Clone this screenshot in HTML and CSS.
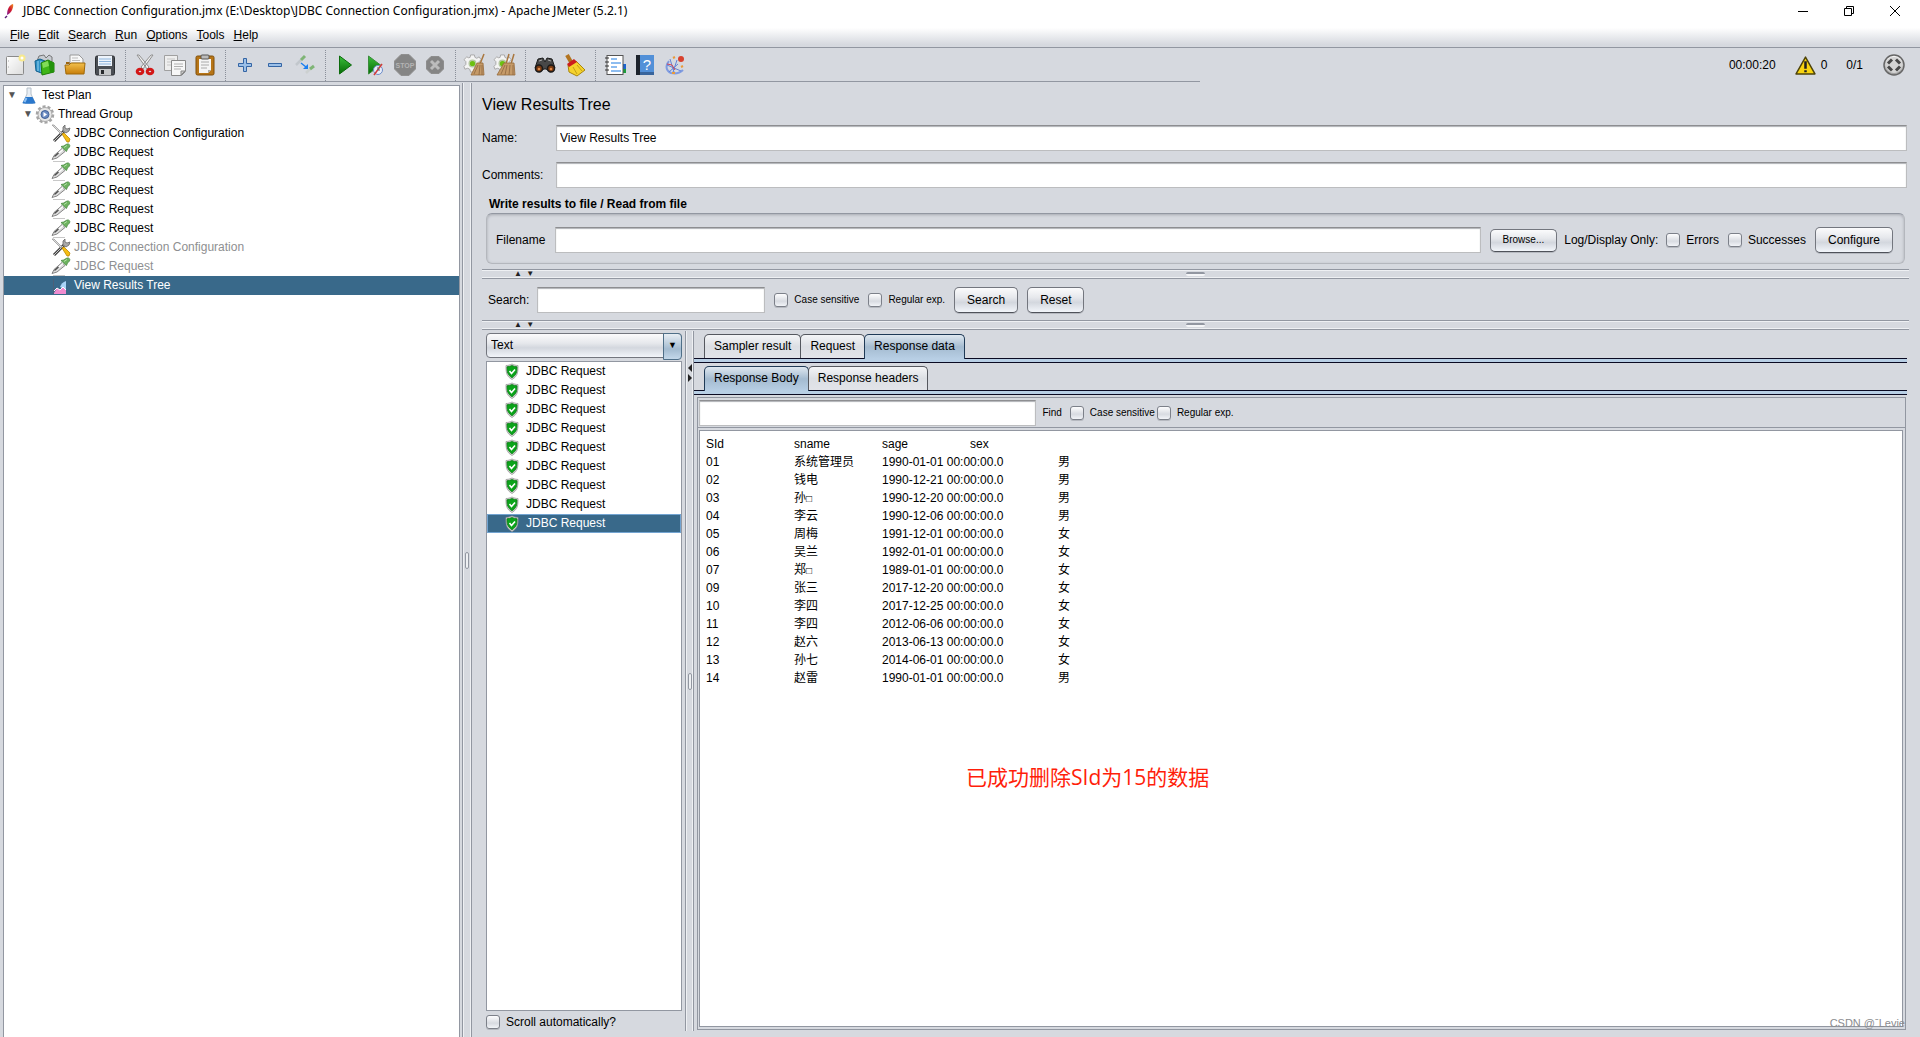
FILE: index.html
```html
<!DOCTYPE html>
<html lang="en">
<head>
    <meta charset="UTF-8">
    <meta name="viewport" content="width=device-width, initial-scale=1.0">
    <title>JDBC Connection Configuration.jmx - Apache JMeter (5.2.1)</title>
    <link rel="stylesheet" href="styles.css">
</head>
<body>
    <!-- shared icons -->
    <svg class="defs" aria-hidden="true">
        <defs>
            <linearGradient id="g-green" x1="0" y1="0" x2="0" y2="1"><stop offset="0" stop-color="#3cc03c"/><stop offset="1" stop-color="#056a05"/></linearGradient>
            <linearGradient id="g-paper" x1="0" y1="0" x2="1" y2="1"><stop offset="0" stop-color="#ffffff"/><stop offset="1" stop-color="#dcdcdc"/></linearGradient>
            <linearGradient id="g-steel" x1="0" y1="0" x2="0" y2="1"><stop offset="0" stop-color="#fafafa"/><stop offset="1" stop-color="#9a9a9a"/></linearGradient>
            <linearGradient id="g-gold" x1="0" y1="0" x2="0" y2="1"><stop offset="0" stop-color="#f3c14d"/><stop offset="1" stop-color="#c77d09"/></linearGradient>
            <linearGradient id="g-feather" x1="0" y1="1" x2="1" y2="0"><stop offset="0" stop-color="#7b1fa0"/><stop offset="0.5" stop-color="#cf1830"/><stop offset="1" stop-color="#f29120"/></linearGradient>
            <symbol id="i-pipette" viewBox="0 0 20 19">
                <path d="M2 18.500h12" stroke="#c8c8c8" stroke-width="1"/>
                <path d="M1 16.500l2-4 8-7 3 3-8 6.500z" fill="#dcdcdc" stroke="#6c6c6c" stroke-width="0.800"/>
                <path d="M3.500 13.500l4-3.500" stroke="#4a4a4a" stroke-width="1.200"/>
                <path d="M8 10l4-3.500" stroke="#fff" stroke-width="1.200"/>
                <path d="M10 3.500l5.500 5 1-2.500 2-2c1-2-0.500-3.500-2.500-3l-3.500 2z" fill="#6db35f" stroke="#4b8a45" stroke-width="0.800"/>
                <path d="M13 4.500l3-2" stroke="#b2e0a6"/>
            </symbol>
            <symbol id="i-tools" viewBox="0 0 20 19">
                <path d="M3 17l11-11" stroke="#444" stroke-width="3"/>
                <path d="M3 17l11-11" stroke="#c9c9c9" stroke-width="1"/>
                <path d="M12 3l2-2 0 3 2 1 3-1-1 3-3 2-3-2z" fill="#aaa" stroke="#666" stroke-width="0.800"/>
                <path d="M1 1l2 0 8 8-1 1z" fill="#ddd" stroke="#999" stroke-width="0.800"/>
                <path d="M11 10l2-1 6 6-1 3-2 0z" fill="#f5bd13" stroke="#b98608" stroke-width="0.800"/>
            </symbol>
            <symbol id="i-shield" viewBox="0 0 14 17">
                <path d="M7 1c2 1 4 1.500 6 1.500 0 6.500 0 10.500-6 14-6-3.500-6-7.500-6-14 2 0 4-0.500 6-1.500z" fill="#dadada" stroke="#9a9a9a" stroke-width="0.800"/>
                <path d="M7 2.500c1.600 0.800 3.300 1.300 5 1.300 0 5.200-0.500 8.200-5 10.900-4.500-2.700-5-5.700-5-10.900 1.700 0 3.400-0.500 5-1.300z" fill="#0ba31a" stroke="#077a12" stroke-width="0.800"/>
                <path d="M4.500 8l2 2.500 3.500-4" fill="none" stroke="#fff" stroke-width="1.600"/>
            </symbol>
            <symbol id="i-gearsmall" viewBox="0 0 20 20">
                <path d="M8 1h4l.5 2.500 2 1L17 3l2 3-2 2v3l2 2-3 3-2-1-2 1-1 3H8l-1-3-2-1-3 1-1-3 2-2V8L1 6l3-3 2 1 1.500-.5z" fill="#f4f4f4" stroke="#a8a8a8"/>
                <circle cx="10" cy="10" r="3.500" fill="#6cc010" stroke="#b4c8a0" stroke-width="1.500"/>
            </symbol>
        </defs>
    </svg>

    <header class="titlebar">
        <svg class="app-icon" viewBox="0 0 12 18"><path d="M3 13C3 8 5 3 9 2c1 2-1 9-6 11z" fill="url(#g-feather)"/><path d="M1 16l2-2" stroke="#5a1c78" stroke-width="1.500"/></svg>
        <h1>JDBC Connection Configuration.jmx (E:\Desktop\JDBC Connection Configuration.jmx) - Apache JMeter (5.2.1)</h1>
        <div class="window-buttons">
            <button aria-label="Minimize"><svg viewBox="0 0 12 12"><path d="M1 6.500h10" stroke="#000"/></svg></button>
            <button aria-label="Restore"><svg viewBox="0 0 12 12"><path d="M1.500 3.500h7v7h-7zM3.500 3V1.500h7v7H9" fill="none" stroke="#000"/></svg></button>
            <button aria-label="Close"><svg viewBox="0 0 12 12"><path d="M1 1l10 10M11 1L1 11" stroke="#000"/></svg></button>
        </div>
    </header>

    <nav class="menubar">
        <button><u>F</u>ile</button>
        <button><u>E</u>dit</button>
        <button><u>S</u>earch</button>
        <button><u>R</u>un</button>
        <button><u>O</u>ptions</button>
        <button><u>T</u>ools</button>
        <button><u>H</u>elp</button>
    </nav>

    <div class="topbar">
        <div class="toolbar">
            <div class="tool-group">
                <button aria-label="New"><svg viewBox="0 0 24 24"><rect x="3.500" y="3.500" width="17" height="18" rx="1" fill="url(#g-paper)" stroke="#8a8a8a"/><path d="M5 8h1M5 14h1" stroke="#aaa"/><circle cx="19" cy="5" r="3.500" fill="#f7e98e"/><circle cx="19" cy="5" r="1.500" fill="#fff"/></svg></button>
                <button aria-label="Templates"><svg viewBox="0 0 24 24"><path d="M4 8l2-5 5-1 2 3 3-3 3 2v5z" fill="#c8ccd2" stroke="#777"/><path d="M2 8l5-2 5 2-1 13-8-3z" fill="#2d8fc4" stroke="#15618e"/><path d="M5 8v10M8 8v11" stroke="#9ad3f0"/><path d="M8 10l7-3 6 3v9l-12 3z" fill="#3fb618" stroke="#1f7d08"/><path d="M15 7l6 3v9l-4 1z" fill="#23930c"/><path d="M9 10l6-2 1 5-6 2z" fill="#82dc58"/></svg></button>
                <button aria-label="Open"><svg viewBox="0 0 24 24"><path d="M3 9h5l2-2h10v4H3z" fill="#9b6410"/><path d="M7 2h9l4 4v8H7z" fill="#f8f8f8" stroke="#999"/><path d="M9 5h6M9 7.500h8M9 10h8" stroke="#bbb"/><path d="M2 12h4l2-2h14l-1 11H3z" fill="url(#g-gold)" stroke="#a06a0a"/></svg></button>
                <button aria-label="Save"><svg viewBox="0 0 24 24"><rect x="2.500" y="3" width="19" height="19" rx="1.500" fill="#4a4e54" stroke="#2c2f33"/><rect x="5" y="3" width="14" height="10" fill="#eef4fb"/><path d="M6 6h12M6 8.500h12M6 11h12" stroke="#8db4dc"/><path d="M6 16h12v6H6z" fill="#c4c6c8"/><rect x="8" y="17" width="3" height="4" fill="#26292d"/></svg></button>
            </div>
            <div class="tool-group">
                <button aria-label="Cut"><svg viewBox="0 0 24 24"><path d="M4 2l2 0 10 12-2 2zM20 2l-2 0L8 14l2 2z" fill="#f0f0f0" stroke="#909090"/><ellipse cx="7" cy="18.500" rx="2.800" ry="2.300" fill="none" stroke="#d31717" stroke-width="3"/><ellipse cx="17" cy="18.500" rx="2.800" ry="2.300" fill="none" stroke="#d31717" stroke-width="3"/></svg></button>
                <button aria-label="Copy"><svg viewBox="0 0 24 24"><path d="M1.500 2.500h13v15h-13z" fill="#eee" stroke="#a0a0a0"/><path d="M4 6h8M4 9h5M4 12h4" stroke="#c6c6c6"/><path d="M8.500 7.500h14v11l-4 4h-10z" fill="#f7f7f7" stroke="#888"/><path d="M11 11h9M11 13.500h9M11 16h7" stroke="#b0b0b0"/><path d="M18 22v-4h4z" fill="#ccc" stroke="#888"/></svg></button>
                <button aria-label="Paste"><svg viewBox="0 0 24 24"><rect x="3" y="3" width="18" height="19" rx="1.500" fill="#b77516" stroke="#7f4f0a"/><path d="M6 6h12v11l-3 3H6z" fill="#f5f5f5"/><rect x="8" y="2" width="8" height="4" rx="1" fill="#bbb" stroke="#555"/><path d="M8 9h8M8 12h8M8 15h6" stroke="#aaa"/><path d="M15 20v-3h3z" fill="#aaa"/></svg></button>
            </div>
            <div class="tool-group">
                <button aria-label="Expand all"><svg viewBox="0 0 24 24"><path d="M10.500 5.500h3v5h5v3h-5v5h-3v-5h-5v-3h5z" fill="#9cc0e8" stroke="#3465a4"/></svg></button>
                <button aria-label="Collapse all"><svg viewBox="0 0 24 24"><path d="M5.500 10.500h13v3h-13z" fill="#9cc0e8" stroke="#3465a4"/></svg></button>
                <button aria-label="Toggle"><svg viewBox="0 0 24 24"><path d="M3 12l5-5" stroke="#c2c7cc" stroke-width="2.500"/><path d="M8 7l4-4" stroke="#7fb576" stroke-width="3"/><path d="M13 20l4-4" stroke="#ccd0d0" stroke-width="2.500"/><path d="M17 16l4-3" stroke="#7fb576" stroke-width="3"/><path d="M8 10l5 4" stroke="#1b7ff0" stroke-width="1.500"/><path d="M15 11v5h-5z" fill="#1b7ff0"/></svg></button>
            </div>
            <div class="tool-group">
                <button aria-label="Start"><svg viewBox="0 0 24 24"><path d="M6.500 3l12 9-12 9z" fill="url(#g-green)" stroke="#0c6b0c"/></svg></button>
                <button aria-label="Start no pauses"><svg viewBox="0 0 24 24"><path d="M5.500 3l12 9-12 9z" fill="url(#g-green)" stroke="#3b8b3b"/><circle cx="15" cy="17" r="4.500" fill="#e8edf8" stroke="#6b8bc8"/><path d="M11 22l8-11" stroke="#d23a3a" stroke-width="1.500"/><path d="M15 14v3h2" fill="none" stroke="#567"/></svg></button>
                <button aria-label="Stop" disabled><svg viewBox="0 0 24 24"><path d="M8 1.500h8l6.500 6.500v8L16 22.500H8L1.500 16V8z" fill="#858585" stroke="#909090"/><text x="12" y="15" text-anchor="middle" class="stop-text">STOP</text></svg></button>
                <button aria-label="Shutdown" disabled><svg viewBox="0 0 24 24"><path d="M8 3.500h8l4.500 4.500v8L16 20.500H8L3.500 16V8z" fill="#858585" stroke="#8e8e8e"/><path d="M8 8l8 8M16 8l-8 8" stroke="#bcbcbc" stroke-width="3"/></svg></button>
            </div>
            <div class="tool-group">
                <button aria-label="Clear"><svg viewBox="0 0 24 24"><use href="#i-gearsmall" x="0" y="1" width="19" height="19"/><path d="M21 1l-4 10" stroke="#a9773f" stroke-width="1.500"/><path d="M14 10h6l1 12H8z" fill="#c59a68" stroke="#96693a" stroke-width="0.800"/><path d="M15 12l-4 9M17 12l-1 10M19 12v10" stroke="#8d6640" stroke-width="0.800"/></svg></button>
                <button aria-label="Clear all"><svg viewBox="0 0 24 24"><use href="#i-gearsmall" x="0" y="1" width="19" height="19"/><path d="M16 1l-3 10M21 1l-3 10" stroke="#a9773f" stroke-width="1.500"/><path d="M11 10h10l1 12H4z" fill="#c59a68" stroke="#96693a" stroke-width="0.800"/><path d="M12 12L8 21M14 12l-2 10M17 12l-1 10M20 12v10" stroke="#8d6640" stroke-width="0.800"/></svg></button>
            </div>
            <div class="tool-group">
                <button aria-label="Search"><svg viewBox="0 0 24 24"><path d="M2 15l3-9 5-1 2 4 2-4 5 1 3 9-4 4-5-3h-2l-5 3z" fill="#484848" stroke="#1c1c1c"/><path d="M6 8l3-1M15 7l3 1" stroke="#aaa"/><circle cx="6" cy="15.500" r="3.500" fill="#7a3a10" stroke="#1a1a1a" stroke-width="1.500"/><circle cx="18" cy="15.500" r="3.500" fill="#7a3a10" stroke="#1a1a1a" stroke-width="1.500"/><circle cx="6" cy="16" r="1.300" fill="#e08a48"/><circle cx="18" cy="16" r="1.300" fill="#e08a48"/></svg></button>
                <button aria-label="Reset search"><svg viewBox="0 0 24 24"><path d="M4 2l4 7" stroke="#b27420" stroke-width="4"/><path d="M5 12l8-4 9 9-8 6-8-4z" fill="#f5d22c" stroke="#a8860c"/><path d="M4 11l7-5 3 3-8 5z" fill="#cc1d1d"/><path d="M10 14l4 7M14 12l5 6" stroke="#c3a015"/></svg></button>
            </div>
            <div class="tool-group">
                <button aria-label="Function helper"><svg viewBox="0 0 24 24"><path d="M19 11h4v5h-4z" fill="#1c66d0"/><path d="M19 16h4v4h-4z" fill="#1b9c3a"/><rect x="4" y="2.500" width="16" height="19" fill="#fff" stroke="#555"/><path d="M8 6h6M8 10h10M8 14h6M8 18h10" stroke="#1c7be0"/><path d="M2 5h4M2 9h4M2 13h4M2 17h4" stroke="#333"/></svg></button>
                <button aria-label="Help"><svg viewBox="0 0 24 24"><path d="M4 2h17v20H4z" fill="#5290d8"/><path d="M3 2h4v20H3z" fill="#1c222b"/><path d="M7 19h14v3H7z" fill="#39659c"/><text x="14" y="17" text-anchor="middle" class="help-text">?</text></svg></button>
                <button aria-label="Undo"><svg viewBox="0 0 24 24"><path d="M6 8c-4 5-3 10 2 12 5 1 9 0 12-3" fill="none" stroke="#7f9be0" stroke-width="2"/><path d="M4 12l14 6M7 6l4 13M14 7l-4 12M6 19l9-8" stroke="#6283d8"/><path d="M4 11l5 1 3 5" fill="none" stroke="#d04454"/><circle cx="18" cy="6" r="3" fill="#d8422f"/><path d="M10 5l2-1M18 14l2-1M9 20h3" stroke="#e99a3a" stroke-width="2"/></svg></button>
            </div>
        </div>
        <div class="status">
            <span>00:00:20</span>
            <button class="warnings"><svg viewBox="0 0 20 18"><path d="M10 1l9 16H1z" fill="#f8d410" stroke="#4d430a" stroke-width="1.400" stroke-linejoin="round"/><path d="M10 5v7M10 13.500v2" stroke="#222" stroke-width="2.400"/></svg>0</button>
            <span class="threads">0/1</span>
            <svg class="remote" viewBox="0 0 22 22"><circle cx="11" cy="11" r="10" fill="url(#g-steel)" stroke="#666" stroke-width="1.500"/><circle cx="11" cy="11" r="8" fill="#d4d4d4"/><path d="M5 9.500l4-4M13 5.500l4 4M5 12.500l4 4M13 16.500l4-4" stroke="#484848" stroke-width="3"/></svg>
        </div>
    </div>

    <main>
        <ul class="tree">
            <li class="level-1"><span class="toggle">▼</span><svg viewBox="0 0 20 19"><path d="M8 2h4v6l4 9H4l4-9z" fill="#e8eef4" stroke="#b6c0ca"/><path d="M6.500 11h7l3 6c0 1-13 1-13 0z" fill="#2b78cc"/><path d="M7.500 12l-2 4" stroke="#8cc0f4" stroke-width="2"/></svg>Test Plan</li>
            <li class="level-2"><span class="toggle">▼</span><svg viewBox="0 0 20 19"><circle cx="10" cy="9.500" r="8" fill="none" stroke="#a4a4a4" stroke-width="2.500" stroke-dasharray="3 2"/><circle cx="10" cy="9.500" r="7" fill="#e6e6e6" stroke="#aaa"/><circle cx="10" cy="9.500" r="4" fill="#6a8ac0" stroke="#456499"/><path d="M8.500 7l3.500 2.500-3.500 2.500z" fill="#fff"/></svg>Thread Group</li>
            <li class="level-3"><svg><use href="#i-tools"/></svg>JDBC Connection Configuration</li>
            <li class="level-3"><svg><use href="#i-pipette"/></svg>JDBC Request</li>
            <li class="level-3"><svg><use href="#i-pipette"/></svg>JDBC Request</li>
            <li class="level-3"><svg><use href="#i-pipette"/></svg>JDBC Request</li>
            <li class="level-3"><svg><use href="#i-pipette"/></svg>JDBC Request</li>
            <li class="level-3"><svg><use href="#i-pipette"/></svg>JDBC Request</li>
            <li class="level-3 off"><svg><use href="#i-tools"/></svg>JDBC Connection Configuration</li>
            <li class="level-3 off"><svg><use href="#i-pipette"/></svg>JDBC Request</li>
            <li class="level-3 selected"><svg viewBox="0 0 20 19"><path d="M2.500 3v15" stroke="#4c5f78"/><path d="M9 11c1-3 3-5 6-6v9z" fill="#a8d4f8"/><path d="M3 17l3-5 3 2 3-3 3 3v4H3z" fill="#f08cd0"/><path d="M3 15l3-3 3 2 3-3 3 3" fill="none" stroke="#fff"/></svg>View Results Tree</li>
        </ul>
        <div class="split-v"><span class="grip"></span></div>

        <section class="detail">
            <h2>View Results Tree</h2>
            <div class="form-row">
                <label for="name">Name:</label>
                <input type="text" id="name" value="View Results Tree">
            </div>
            <div class="form-row">
                <label for="comments">Comments:</label>
                <input type="text" id="comments">
            </div>
            <h3>Write results to file / Read from file</h3>
            <div class="file-box">
                <label for="filename">Filename</label>
                <input type="text" id="filename">
                <button class="btn btn-small">Browse...</button>
                <span class="log-label">Log/Display Only:</span>
                <label class="check"><input type="checkbox">Errors</label>
                <label class="check"><input type="checkbox">Successes</label>
                <button class="btn">Configure</button>
            </div>
            <div class="split-h"><span class="arrows">▲ ▼</span><span class="grip"></span></div>
            <div class="search-row">
                <label for="search">Search:</label>
                <input type="text" id="search">
                <label class="check small"><input type="checkbox">Case sensitive</label>
                <label class="check small"><input type="checkbox">Regular exp.</label>
                <button class="btn">Search</button>
                <button class="btn">Reset</button>
            </div>
            <div class="split-h"><span class="arrows">▲ ▼</span><span class="grip"></span></div>

            <div class="results">
                <div class="samples">
                    <div class="combo">
                        <select aria-label="Renderer"><option>Text</option></select>
                    </div>
                    <ul class="sample-list">
                        <li><svg><use href="#i-shield"/></svg>JDBC Request</li>
                        <li><svg><use href="#i-shield"/></svg>JDBC Request</li>
                        <li><svg><use href="#i-shield"/></svg>JDBC Request</li>
                        <li><svg><use href="#i-shield"/></svg>JDBC Request</li>
                        <li><svg><use href="#i-shield"/></svg>JDBC Request</li>
                        <li><svg><use href="#i-shield"/></svg>JDBC Request</li>
                        <li><svg><use href="#i-shield"/></svg>JDBC Request</li>
                        <li><svg><use href="#i-shield"/></svg>JDBC Request</li>
                        <li class="selected"><svg><use href="#i-shield"/></svg>JDBC Request</li>
                    </ul>
                    <label class="check scroll"><input type="checkbox">Scroll automatically?</label>
                </div>
                <div class="split-v inner">
                    <span class="side-arrows"><svg viewBox="0 0 6 18"><path d="M5 0v8L1 4zM1 10v8l4-4z" fill="#222"/></svg></span>
                    <span class="grip"></span>
                </div>
                <div class="response">
                    <div class="tabs">
                        <button>Sampler result</button>
                        <button>Request</button>
                        <button class="active">Response data</button>
                    </div>
                    <div class="tabs">
                        <button class="active">Response Body</button>
                        <button>Response headers</button>
                    </div>
                    <div class="body-panel">
                        <div class="find-bar">
                            <input type="text" id="find">
                            <label for="find" class="small find-label">Find</label>
                            <label class="check small"><input type="checkbox">Case sensitive</label>
                            <label class="check small"><input type="checkbox">Regular exp.</label>
                        </div>
                        <div class="output">
                            <table>
                                <tr><th>SId</th><th>sname</th><th>sage</th><th>sex</th><th></th></tr>
                                <tr><td>01</td><td>系统管理员</td><td colspan="2">1990-01-01 00:00:00.0</td><td>男</td></tr>
                                <tr><td>02</td><td>钱电</td><td colspan="2">1990-12-21 00:00:00.0</td><td>男</td></tr>
                                <tr><td>03</td><td>孙<span class="tofu">□</span></td><td colspan="2">1990-12-20 00:00:00.0</td><td>男</td></tr>
                                <tr><td>04</td><td>李云</td><td colspan="2">1990-12-06 00:00:00.0</td><td>男</td></tr>
                                <tr><td>05</td><td>周梅</td><td colspan="2">1991-12-01 00:00:00.0</td><td>女</td></tr>
                                <tr><td>06</td><td>吴兰</td><td colspan="2">1992-01-01 00:00:00.0</td><td>女</td></tr>
                                <tr><td>07</td><td>郑<span class="tofu">□</span></td><td colspan="2">1989-01-01 00:00:00.0</td><td>女</td></tr>
                                <tr><td>09</td><td>张三</td><td colspan="2">2017-12-20 00:00:00.0</td><td>女</td></tr>
                                <tr><td>10</td><td>李四</td><td colspan="2">2017-12-25 00:00:00.0</td><td>女</td></tr>
                                <tr><td>11</td><td>李四</td><td colspan="2">2012-06-06 00:00:00.0</td><td>女</td></tr>
                                <tr><td>12</td><td>赵六</td><td colspan="2">2013-06-13 00:00:00.0</td><td>女</td></tr>
                                <tr><td>13</td><td>孙七</td><td colspan="2">2014-06-01 00:00:00.0</td><td>女</td></tr>
                                <tr><td>14</td><td>赵雷</td><td colspan="2">1990-01-01 00:00:00.0</td><td>男</td></tr>
                            </table>
                            <p class="note">已成功删除SId为15的数据</p>
                        </div>
                    </div>
                </div>
            </div>
        </section>
    </main>
    <span class="watermark">CSDN @ˉLevie</span>
</body>
</html>
```
FILE: styles.css
```css
* {
    box-sizing: border-box;
}
body {
    margin: 0;
    height: 100vh;
    display: flex;
    flex-direction: column;
    overflow: hidden;
    position: relative;
    background: #d6d9df;
    color: #000;
    font-family: "Liberation Sans", Arial, "Noto Sans CJK SC", sans-serif;
    font-size: 12px;
    line-height: 16px;
}
button, input, select {
    font: inherit;
    color: inherit;
}
button {
    border: none;
    background: none;
    padding: 0;
}
h1, h2, h3, p, ul {
    margin: 0;
    padding: 0;
    font-weight: normal;
}
ul {
    list-style: none;
}
.defs {
    position: absolute;
    width: 0;
    height: 0;
}

/* title and menu */
.titlebar {
    display: flex;
    align-items: center;
    height: 23px;
    padding: 0 2px 2px 4px;
    background: #fff;
}
.app-icon {
    width: 12px;
    height: 18px;
    margin-right: 7px;
}
.titlebar h1 {
    flex: 1;
    font-family: "Noto Sans", "Open Sans", sans-serif;
    font-size: 12px;
}
.window-buttons {
    display: flex;
}
.window-buttons button {
    width: 46px;
    height: 20px;
}
.window-buttons svg {
    display: block;
    width: 12px;
    height: 12px;
    margin: 0 auto;
}
.menubar {
    display: flex;
    gap: 9px;
    height: 25px;
    padding: 0 10px;
    background: linear-gradient(#fff 20%, #d6d9df 90%);
    border-bottom: 1px solid #9297a1;
}

/* toolbar */
.topbar {
    display: flex;
    justify-content: space-between;
    height: 34px;
}
.toolbar {
    display: flex;
    width: 62.5%;
    border-bottom: 1px solid #9297a1;
}
.tool-group {
    display: flex;
    position: relative;
    margin-right: 10px;
}
.tool-group:not(:last-child)::after {
    content: "";
    position: absolute;
    top: 2px;
    bottom: 0;
    right: -6px;
    border-right: 1px dotted #8a8f99;
}
.tool-group button {
    width: 30px;
    height: 34px;
}
.tool-group svg {
    display: block;
    width: 24px;
    height: 24px;
    margin: 0 auto;
}
.stop-text {
    font-size: 7px;
    font-weight: bold;
    fill: #b4b4b4;
}
.help-text {
    font-size: 15px;
    fill: #fff;
}
.status {
    display: flex;
    align-items: center;
    padding-right: 15px;
}
.warnings {
    display: flex;
    align-items: center;
    gap: 5px;
    margin: 0 19px;
}
.warnings svg {
    width: 21px;
    height: 19px;
}
.remote {
    width: 22px;
    height: 22px;
    margin-left: 20px;
}

/* main split */
main {
    display: flex;
    flex: 1;
    min-height: 0;
}
.tree {
    flex: 0 0 24%;
    width: 24%;
    margin: 3px 2px 0 3px;
    max-width: 457px;
    background: #fff;
    border: 1px solid #9297a1;
    border-bottom: none;
}
.tree li {
    display: flex;
    height: 19px;
    line-height: 18px;
}
.tree li svg {
    width: 20px;
    height: 19px;
    margin-right: 3px;
}
.toggle {
    width: 12px;
    font-size: 10px;
    color: #555;
}
.level-1 {
    padding-left: 3px;
}
.level-2 {
    padding-left: 19px;
}
.level-3 {
    padding-left: 47px;
}
.off {
    color: #8e8f91;
}
.tree .selected {
    background: #39698a;
    color: #fff;
}
.split-v {
    display: flex;
    flex: 0 0 10px;
    position: relative;
    align-items: center;
    justify-content: center;
    margin-top: 1px;
    border: solid #9297a1;
    border-width: 0 1px;
    box-shadow: inset 1px 0 #eef0f3, inset -1px 0 #eef0f3;
}
.split-v.inner {
    flex-basis: 9px;
}
.split-v .grip {
    width: 4px;
    height: 17px;
    border: 1px solid #9297a1;
    border-radius: 2px;
    background: #eef0f3;
}
.split-h {
    display: flex;
    flex: 0 0 10px;
    position: relative;
    align-items: center;
    justify-content: center;
    border: solid #9297a1;
    border-width: 1px 0;
    box-shadow: inset 0 1px #eef0f3, inset 0 -1px #eef0f3;
}
.split-h .grip {
    width: 19px;
    height: 4px;
    border-top: 2px solid #9297a1;
    border-radius: 2px;
    background: #f4f5f7;
}
.arrows {
    position: absolute;
    left: 32px;
    font-size: 8px;
    line-height: 8px;
    color: #222;
    word-spacing: 2px;
}
.side-arrows {
    position: absolute;
    top: 33px;
    left: 1px;
    width: 6px;
    height: 18px;
}
.side-arrows svg {
    display: block;
}

/* detail form */
.detail {
    display: flex;
    flex-direction: column;
    flex: 1;
    min-width: 0;
    padding: 13px 11px 6px 10px;
}
.detail h2 {
    margin-bottom: 10px;
    font-size: 16px;
    line-height: 20px;
}
.form-row {
    display: flex;
    align-items: center;
    margin: 0 2px 11px 0;
}
.form-row label {
    width: 74px;
}
input[type="text"] {
    flex: 1;
    min-width: 0;
    height: 26px;
    padding: 0 3px;
    background: #fff;
    border: 1px solid #bcbdbf;
    border-top-color: #8d8e91;
    border-radius: 0;
    box-shadow: inset 0 1px 1px #b0b2b6;
    outline: none;
}
.detail h3 {
    margin: -3px 0 1px 7px;
    font-size: 12px;
    font-weight: bold;
}
.file-box {
    display: flex;
    align-items: center;
    margin: 0 4px 5px;
    padding: 13px 11px 10px 9px;
    border: 1px solid #b4b7bd;
    border-top-color: #9297a1;
    border-radius: 6px;
    box-shadow: inset 0 1px 3px #a6a9b0;
}
.file-box input[type="text"] {
    margin: 0 9px 0 10px;
}
.log-label {
    margin: 0 8px 0 7px;
}
.check {
    display: flex;
    align-items: center;
    gap: 6px;
    margin-right: 9px;
}
.check input {
    appearance: none;
    flex: none;
    width: 14px;
    height: 14px;
    margin: 0;
    border: 1px solid #7c8089;
    border-radius: 3px;
    background: linear-gradient(#fdfdfe, #d8dbe1 60%, #f2f4f8);
    box-shadow: 0 1px #b6b9c0;
}
.small {
    font-size: 10px;
}
.btn {
    height: 26px;
    padding: 0 12px;
    border: 1px solid #73767e;
    border-bottom-color: #4f525a;
    border-radius: 5px;
    background: linear-gradient(#fbfbfc, #e6e8ec 40%, #d3d7de 60%, #f2f5fa);
    box-shadow: 0 1px #b6b9c0;
}
.btn-small {
    height: 23px;
    font-size: 10px;
}
.search-row {
    display: flex;
    align-items: center;
    margin: 8px 0 7px 6px;
}
.search-row input[type="text"] {
    flex: 0 0 228px;
    margin: 0 9px 0 8px;
}
.search-row .btn + .btn {
    margin-left: 9px;
}

/* results */
.results {
    display: flex;
    flex: 1;
    min-height: 0;
}
.samples {
    display: flex;
    flex-direction: column;
    flex: 0 0 196px;
    margin: 3px 3px 0 4px;
}
.combo {
    position: relative;
    margin-bottom: 3px;
}
.combo select {
    display: block;
    appearance: none;
    width: 100%;
    height: 25px;
    padding: 0 4px 2px;
    border: 1px solid #73767e;
    border-radius: 4px;
    background: linear-gradient(#fbfbfc, #e6e8ec 40%, #d3d7de 60%, #f2f5fa);
}
.combo::after {
    content: "▼";
    position: absolute;
    top: 0;
    right: 0;
    width: 17px;
    height: 25px;
    border: 1px solid #4f6f88;
    border-radius: 0 4px 4px 0;
    background: linear-gradient(#e8eef4, #a3bbd0 60%, #c4d8ea);
    font-size: 9px;
    line-height: 22px;
    text-align: center;
    pointer-events: none;
}
.sample-list {
    flex: 1;
    border: 1px solid #9297a1;
    background: #fff;
}
.sample-list li {
    display: flex;
    height: 19px;
    padding-left: 18px;
    line-height: 18px;
}
.sample-list svg {
    width: 14px;
    height: 17px;
    margin: 1px 7px 0 0;
}
.sample-list .selected {
    background: #39698a;
    color: #fff;
    outline: 1px solid #73a4d1;
    outline-offset: -1px;
}
.scroll {
    height: 18px;
    margin-top: 2px;
}
.response {
    display: flex;
    flex-direction: column;
    flex: 1;
    min-width: 0;
    padding: 4px 2px 1px 0;
}
.tabs {
    display: flex;
    flex: none;
    height: 29px;
    margin-bottom: 3px;
    padding-left: 10px;
    background: linear-gradient(#0a0a22, #0a0a22) 0 24px / 100% 1px no-repeat,
        linear-gradient(#b8cfe5, #b8cfe5) 0 25px / 100% 3px no-repeat,
        linear-gradient(#0a0a22, #0a0a22) 0 28px / 100% 1px no-repeat;
}
.tabs button {
    height: 24px;
    padding: 0 9px 2px;
    border: 1px solid #55585f;
    border-bottom: none;
    border-radius: 5px 5px 0 0;
    background: linear-gradient(#f4f5f7, #dcdfe4 50%, #e2e4e9);
}
.tabs button + button {
    margin-left: -1px;
}
.tabs .active {
    height: 25px;
    border-color: #1f3a56;
    background: linear-gradient(#dfe8f0, #a4bbd0 50%, #b8cfe5);
}
.body-panel {
    display: flex;
    flex-direction: column;
    flex: 1;
    min-height: 0;
    margin: -1px 1px 0 3px;
    border: 1px solid #9297a1;
}
.find-bar {
    display: flex;
    align-items: center;
    padding: 2px 1px 1px;
    border-bottom: 1px solid #9297a1;
}
.find-bar input[type="text"] {
    flex: 0 0 28%;
}
.find-label {
    margin: 0 8px 0 6px;
}
.find-bar .check {
    margin-right: 2px;
}
.output {
    position: relative;
    flex: 1;
    margin: 2px 2px 2px 1px;
    padding: 4px 6px;
    border: 1px solid #9297a1;
    background: #fff;
}
.output table {
    width: 440px;
    table-layout: fixed;
    border-spacing: 0;
}
.output th, .output td {
    height: 18px;
    padding: 0;
    font-weight: normal;
    text-align: left;
    white-space: nowrap;
}
.tofu {
    font-size: 10px;
}
.note {
    position: absolute;
    top: 332px;
    left: 266px;
    font-family: "Open Sans", "Noto Sans CJK SC", sans-serif;
    font-size: 21px;
    line-height: 28px;
    color: #ff1e0a;
}
.watermark {
    position: absolute;
    right: 15px;
    bottom: 6px;
    color: #8a8b8f;
    font-size: 11px;
}
```
